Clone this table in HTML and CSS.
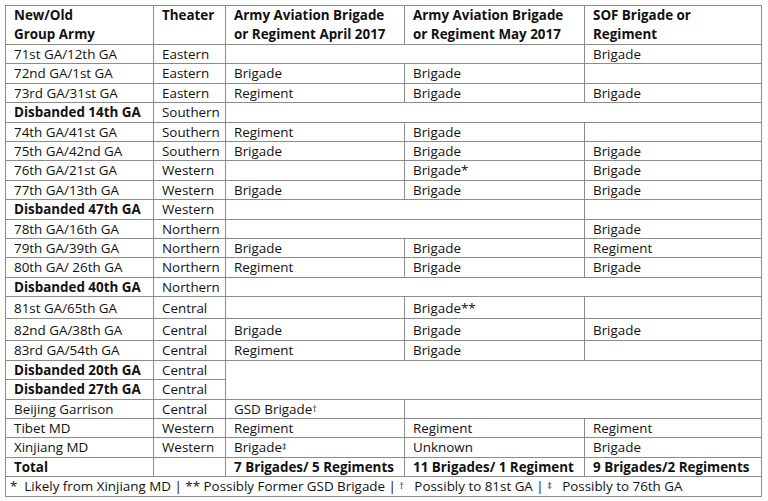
FILE: index.html
```html
<!DOCTYPE html>
<html>
<head>
<meta charset="utf-8">
<link rel="stylesheet" href="styles.css">
</head>
<body>
<table class="grid">
  <colgroup>
    <col class="c1"><col class="c2"><col class="c3"><col class="c4"><col class="c5">
  </colgroup>
  <tr class="head">
    <td>New/Old<br>Group Army</td>
    <td>Theater</td>
    <td>Army Aviation Brigade<br>or Regiment April 2017</td>
    <td>Army Aviation Brigade<br>or Regiment May 2017</td>
    <td>SOF Brigade or<br>Regiment</td>
  </tr>
  <tr><td>71st GA/12th GA</td><td>Eastern</td><td colspan="2"></td><td>Brigade</td></tr>
  <tr><td>72nd GA/1st GA</td><td>Eastern</td><td>Brigade</td><td>Brigade</td><td></td></tr>
  <tr><td>73rd GA/31st GA</td><td>Eastern</td><td>Regiment</td><td>Brigade</td><td>Brigade</td></tr>
  <tr><td class="b">Disbanded 14th GA</td><td>Southern</td><td colspan="3"></td></tr>
  <tr><td>74th GA/41st GA</td><td>Southern</td><td>Regiment</td><td>Brigade</td><td></td></tr>
  <tr><td>75th GA/42nd GA</td><td>Southern</td><td>Brigade</td><td>Brigade</td><td>Brigade</td></tr>
  <tr><td>76th GA/21st GA</td><td>Western</td><td></td><td>Brigade*</td><td>Brigade</td></tr>
  <tr><td>77th GA/13th GA</td><td>Western</td><td>Brigade</td><td>Brigade</td><td>Brigade</td></tr>
  <tr><td class="b">Disbanded 47th GA</td><td>Western</td><td colspan="2"></td><td></td></tr>
  <tr><td>78th GA/16th GA</td><td>Northern</td><td colspan="2"></td><td>Brigade</td></tr>
  <tr><td>79th GA/39th GA</td><td>Northern</td><td>Brigade</td><td>Brigade</td><td>Regiment</td></tr>
  <tr><td>80th GA/ 26th GA</td><td>Northern</td><td>Regiment</td><td>Brigade</td><td>Brigade</td></tr>
  <tr><td class="b">Disbanded 40th GA</td><td>Northern</td><td colspan="3"></td></tr>
  <tr class="tall"><td>81st GA/65th GA</td><td>Central</td><td></td><td>Brigade**</td><td></td></tr>
  <tr class="tall"><td>82nd GA/38th GA</td><td>Central</td><td>Brigade</td><td>Brigade</td><td>Brigade</td></tr>
  <tr><td>83rd GA/54th GA</td><td>Central</td><td>Regiment</td><td>Brigade</td><td></td></tr>
  <tr><td class="b">Disbanded 20th GA</td><td>Central</td><td colspan="3" rowspan="2"></td></tr>
  <tr><td class="b">Disbanded 27th GA</td><td>Central</td></tr>
  <tr><td>Beijing Garrison</td><td>Central</td><td>GSD Brigade<span class="mark">†</span></td><td colspan="2"></td></tr>
  <tr><td>Tibet MD</td><td>Western</td><td>Regiment</td><td>Regiment</td><td>Regiment</td></tr>
  <tr><td>Xinjiang MD</td><td>Western</td><td>Brigade<span class="mark">‡</span></td><td>Unknown</td><td>Brigade</td></tr>
  <tr class="total"><td>Total</td><td></td><td>7 Brigades/ 5 Regiments</td><td>11 Brigades/ 1 Regiment</td><td>9 Brigades/2 Regiments</td></tr>
  <tr><td colspan="5" class="note">*&nbsp; Likely from Xinjiang MD | ** Possibly Former GSD Brigade | <span class="mark">†</span>&nbsp;&nbsp; Possibly to 81st GA | <span class="mark">‡</span>&nbsp;&nbsp; Possibly to 76th GA</td></tr>
</table>
</body>
</html>
```
FILE: styles.css
```css
html, body {
  margin: 0;
  padding: 0;
  background: #ffffff;
}
body {
  padding: 5px 0 0 5px;
  font-family: "Open Sans", "Noto Sans", "DejaVu Sans", sans-serif;
  font-size: 13.4px;
  color: #111111;
}
.grid {
  border-collapse: collapse;
  table-layout: fixed;
  width: 756px;
}
.c1 { width: 148px; }
.c2 { width: 72px; }
.c3 { width: 179px; }
.c4 { width: 180px; }
.c5 { width: 177px; }
.grid td {
  border: 1px solid #8c8c8c;
  padding: 0 0 0 8px;
  line-height: 18.4px;
  height: 18.4px;
  vertical-align: middle;
  white-space: nowrap;
  overflow: hidden;
}
.head td {
  font-weight: 700;
  line-height: 19px;
  vertical-align: top;
}
.tall td {
  height: 21px;
}
.b {
  font-weight: 700;
}
.total td {
  font-weight: 700;
}
.mark {
  font-size: 9px;
  vertical-align: 2px;
}
.grid td.note {
  padding-left: 4px;
}
```
